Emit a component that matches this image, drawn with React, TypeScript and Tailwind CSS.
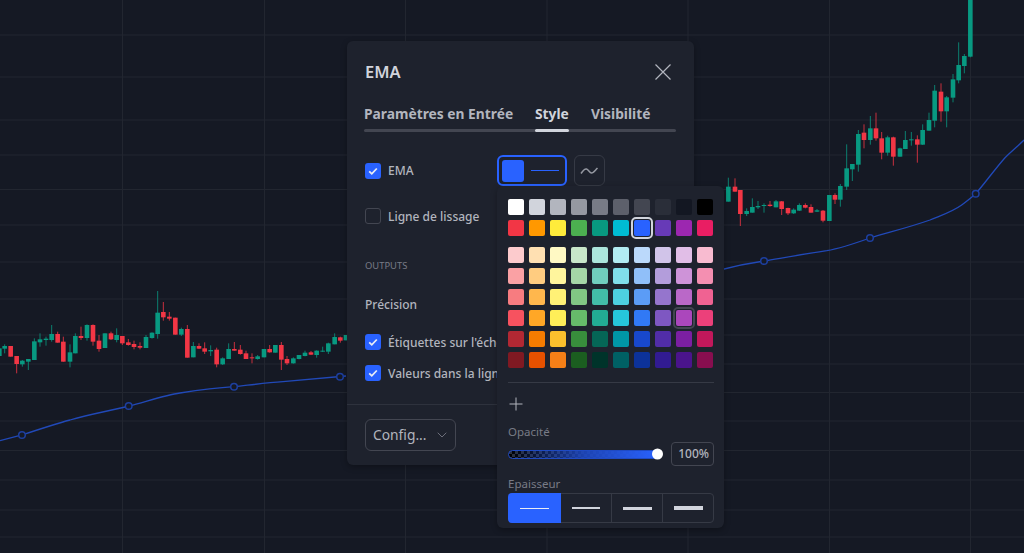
import React from 'react';
import { ChevronDown } from 'lucide-react';

type Candle = [number, number, number, number, number, 'g' | 'r'];

// x, wick top, wick bottom, body top, body bottom (measured at 3x from x=0, y=280)
const leftCandles: Candle[] = [
    [-2, 205, 228, 205, 228, 'g'], [14, 193, 220, 198, 206, 'g'], [32, 198, 230, 198, 230, 'r'], [50, 228, 280, 228, 252, 'r'],
    [67, 240, 260, 242, 253, 'g'], [85, 237, 270, 237, 245, 'g'], [103, 175, 240, 184, 240, 'g'], [120, 160, 200, 178, 187, 'g'],
    [138, 170, 197, 176, 180, 'g'], [155, 135, 185, 162, 180, 'g'], [173, 155, 188, 162, 188, 'r'], [190, 170, 245, 185, 245, 'r'],
    [210, 193, 262, 217, 245, 'g'], [226, 160, 220, 168, 220, 'g'], [243, 140, 180, 168, 174, 'r'], [261, 133, 182, 135, 174, 'g'],
    [279, 133, 197, 135, 185, 'r'], [297, 165, 215, 182, 207, 'r'], [315, 160, 204, 160, 204, 'g'], [333, 155, 180, 160, 178, 'r'],
    [350, 145, 187, 165, 180, 'g'], [367, 168, 195, 168, 190, 'r'], [385, 177, 197, 187, 195, 'r'], [402, 182, 208, 192, 201, 'r'],
    [420, 187, 208, 198, 203, 'r'], [438, 165, 204, 171, 204, 'g'], [456, 157, 176, 158, 174, 'g'], [473, 33, 176, 98, 162, 'g'],
    [490, 66, 122, 96, 112, 'r'], [508, 96, 122, 110, 116, 'r'], [526, 113, 164, 113, 164, 'r'], [544, 143, 168, 147, 164, 'g'],
    [562, 135, 233, 147, 233, 'r'], [580, 186, 232, 198, 232, 'g'], [597, 190, 207, 198, 206, 'r'], [614, 187, 222, 205, 215, 'r'],
    [632, 196, 228, 210, 214, 'g'], [650, 203, 262, 209, 253, 'r'], [668, 232, 255, 235, 253, 'g'], [686, 190, 237, 207, 237, 'g'],
    [703, 186, 212, 207, 212, 'r'], [721, 195, 224, 209, 222, 'r'], [738, 212, 237, 220, 237, 'r'], [756, 220, 250, 232, 235, 'r'],
    [773, 225, 239, 229, 237, 'g'], [792, 207, 232, 207, 232, 'g'], [809, 195, 218, 207, 217, 'r'], [826, 195, 218, 195, 218, 'g'],
    [844, 186, 270, 195, 239, 'r'], [861, 228, 255, 237, 250, 'r'], [880, 232, 251, 235, 250, 'g'], [897, 225, 238, 225, 237, 'g'],
    [915, 212, 229, 218, 228, 'g'], [933, 213, 225, 217, 224, 'r'], [950, 211, 233, 212, 225, 'g'], [968, 200, 216, 212, 215, 'g'],
    [985, 188, 222, 190, 215, 'g'], [1004, 160, 193, 171, 193, 'g'], [1021, 170, 188, 172, 182, 'r'], [1038, 165, 181, 165, 181, 'g'],
];

// same, from x=720, y=0
const rightCandles: Candle[] = [
    [25, 533, 605, 560, 605, 'g'], [45, 535, 575, 560, 575, 'r'], [61, 570, 678, 570, 642, 'r'], [80, 625, 648, 633, 642, 'g'],
    [97, 595, 638, 621, 638, 'g'], [114, 603, 627, 618, 622, 'g'], [132, 610, 638, 615, 618, 'g'], [150, 603, 620, 614, 618, 'r'],
    [168, 600, 622, 604, 622, 'g'], [185, 603, 645, 604, 627, 'r'], [204, 623, 645, 624, 640, 'r'], [221, 625, 642, 629, 640, 'g'],
    [238, 610, 633, 615, 632, 'g'], [256, 610, 625, 615, 623, 'r'], [273, 613, 638, 621, 638, 'r'], [291, 627, 636, 631, 635, 'g'],
    [309, 630, 667, 632, 662, 'r'], [328, 585, 663, 585, 663, 'g'], [345, 580, 612, 585, 599, 'r'], [361, 552, 620, 558, 599, 'g'],
    [380, 433, 570, 505, 560, 'g'], [397, 492, 543, 492, 508, 'g'], [415, 390, 515, 402, 494, 'g'], [432, 373, 445, 398, 420, 'r'],
    [451, 348, 434, 385, 420, 'g'], [468, 338, 422, 385, 415, 'r'], [485, 396, 478, 415, 458, 'r'], [503, 407, 467, 412, 458, 'g'],
    [520, 410, 497, 412, 470, 'r'], [540, 443, 470, 445, 470, 'g'], [556, 393, 447, 420, 447, 'g'], [574, 396, 437, 418, 421, 'g'],
    [592, 406, 488, 418, 434, 'r'], [608, 373, 435, 390, 434, 'g'], [627, 338, 392, 360, 392, 'g'], [644, 255, 382, 272, 362, 'g'],
    [663, 250, 365, 275, 334, 'r'], [680, 288, 382, 292, 334, 'g'], [699, 222, 307, 238, 293, 'g'], [716, 127, 250, 195, 241, 'g'],
    [733, 162, 220, 168, 198, 'g'], [751, 0, 172, 0, 170, 'g'],
];

const gridY = [35, 77, 120, 155, 189.5, 225, 262, 299, 335, 364, 392.5, 421, 450.5, 480, 510, 537];
const gridX = [122.5, 264.5, 405.5, 547, 688, 829.5, 970.5];

const emaLeft = 'M0 440.7L22 435C40 429 55 424 70 420C90 414 110 411 128.7 406C145 402 165 395 180 393C200 390 215 388 234 386.700C250 385 265 383 283 381.700C300 380 320 378.500 346 376';
const emaRight = 'M720 270C735 266 750 263 764 261C785 257.500 805 254 826.700 250.700C842 248 856 243 870 238C890 232 910 227 930 220C942 215 952 212 961.700 205C967 201 972 197 975.700 193.700C985 183 995 169 1005 157.700C1012 151 1018 146 1024 140';
const emaDots = [[22, 435], [128.7, 406], [234, 386.7], [340, 376.7], [764, 261], [870, 238], [975.7, 193.7]];

const swatchTop = [
    ['#ffffff', '#d1d4dc', '#b2b5be', '#9598a1', '#787b86', '#5d606b', '#434651', '#2a2e39', '#131722', '#000000'],
    ['#f23645', '#ff9800', '#ffeb3b', '#4caf50', '#089981', '#00bcd4', '#2962ff', '#673ab7', '#9c27b0', '#e91e63'],
];
const swatchBottom = [
    ['#fccbcd', '#ffe0b2', '#fff9c4', '#c8e6c9', '#ace5dc', '#b2ebf2', '#bbd9fb', '#d1c4e9', '#e1bee7', '#f8bbd0'],
    ['#faa1a4', '#ffcc80', '#fff59d', '#a5d6a7', '#70ccbd', '#80deea', '#90bff9', '#b39ddb', '#ce93d8', '#f48fb1'],
    ['#f77c80', '#ffb74d', '#fff176', '#81c784', '#42bda8', '#4dd0e1', '#5b9cf6', '#9575cd', '#ba68c8', '#f06292'],
    ['#f7525f', '#ffa726', '#ffee58', '#66bb6a', '#22ab94', '#26c6da', '#3179f5', '#7e57c2', '#ab47bc', '#ec407a'],
    ['#b22833', '#f57c00', '#fbc02d', '#388e3c', '#056656', '#0097a7', '#1848cc', '#512da8', '#7b1fa2', '#c2185b'],
    ['#801922', '#e65100', '#f57f17', '#1b5e20', '#00332a', '#006064', '#0c3299', '#311b92', '#4a148c', '#880e4f'],
];

const Candles: React.FC<{ data: Candle[]; ox: number; oy: number }> = ({ data, ox, oy }) => (
    <>
        {data.map(([x, wt, wb, bt, bb, c], i) => {
            const color = c === 'g' ? '#089981' : '#f23645';
            const cx = ox + x / 3;
            return (
                <g key={i}>
                    <rect x={cx - 0.5} y={oy + wt / 3} width={1} height={(wb - wt) / 3} fill={color} opacity={0.8} />
                    <rect x={cx - 2.3} y={oy + bt / 3} width={4.6} height={Math.max((bb - bt) / 3, 1)} fill={color} />
                </g>
            );
        })}
    </>
);

const Chart = () => (
    <svg className="absolute inset-0" width={1024} height={553} viewBox="0 0 1024 553">
        {gridY.map((y) => <line key={y} x1={0} x2={1024} y1={y} y2={y} stroke="#222630" strokeWidth={1} />)}
        {gridX.map((x) => <line key={x} x1={x} x2={x} y1={0} y2={553} stroke="#222630" strokeWidth={1} />)}
        <Candles data={leftCandles} ox={0} oy={280} />
        <Candles data={rightCandles} ox={720} oy={0} />
        <path d={emaLeft} fill="none" stroke="#2149b8" strokeWidth={1.3} />
        <path d={emaRight} fill="none" stroke="#2149b8" strokeWidth={1.3} />
        {emaDots.map(([x, y]) => <circle key={x} cx={x} cy={y} r={3.3} fill="#151924" stroke="#1d3f9f" strokeWidth={1.5} />)}
    </svg>
);

const Checkbox: React.FC<{ checked?: boolean }> = ({ checked }) =>
    checked ? (
        <span className="flex h-4 w-4 shrink-0 items-center justify-center rounded-[3px] bg-[#2962ff]">
            <svg width="16" height="16" viewBox="0 0 16 16" fill="none">
                <path d="M4.2 8.300l2.600 2.500 5-5.300" stroke="#e8ecf5" strokeWidth="1.8" />
            </svg>
        </span>
    ) : (
        <span className="h-4 w-4 shrink-0 rounded-[3px] border border-[#434651]" />
    );

const SwatchRow: React.FC<{ colors: string[] }> = ({ colors }) => (
    <div className="flex gap-[5px]">
        {colors.map((c) => (
            <div
                key={c}
                style={{ backgroundColor: c }}
                className={
                    c === '#2962ff'
                        ? 'h-4 w-4 rounded-[2px] outline-2 outline-offset-1 outline-[#d1d4dc]'
                        : c === '#ab47bc'
                          ? 'h-4 w-4 rounded-[2px] outline-2 outline-offset-1 outline-[#434651]'
                          : 'h-4 w-4 rounded-[2px]'
                }
            />
        ))}
    </div>
);

const ColorPicker = () => (
    <div className="absolute left-[497px] top-[186px] h-[342px] w-[227px] rounded-md bg-[#1e222d] pl-[11px] pt-[13px] shadow-[0_2px_6px_rgba(0,0,0,0.3)]">
        <div className="flex flex-col gap-[5px]">
            {swatchTop.map((row) => <SwatchRow key={row[0]} colors={row} />)}
        </div>
        <div className="mt-[11px] flex flex-col gap-[5px]">
            {swatchBottom.map((row) => <SwatchRow key={row[0]} colors={row} />)}
        </div>
        <div className="mt-[14px] h-px w-[206px] bg-[#363a45]" />
        <svg className="mt-[14px] block" width="16" height="14" viewBox="0 0 16 14" fill="none">
            <path d="M1.500 7h13M8 .5v13" stroke="#b2b5be" strokeWidth="1" />
        </svg>
        <div className="mt-[13px] flex h-4 items-center text-[11.5px] leading-none text-[#787b86]">Opacité</div>
        <div className="mt-[2px] flex h-6 w-[206px] items-center justify-between">
            <div className="relative h-[9px] w-[152px] rounded-full border border-[#1f4ac4] bg-[repeating-conic-gradient(#000000_0_25%,#2a2e39_0_50%)] bg-size-[6px_6px]">
                <div className="h-full w-full rounded-full bg-linear-to-r from-transparent via-[#1f4ac4]/90 via-50% to-[#2962ff]" />
                <div className="absolute right-[-4px] top-1/2 h-[11px] w-[11px] -translate-y-1/2 rounded-full bg-white" />
            </div>
            <div className="flex h-6 w-[43px] items-center justify-end rounded-[4px] border border-[#434651] pr-1 text-xs font-medium text-[#b2b5be]">100%</div>
        </div>
        <div className="mt-[10px] flex h-4 items-center text-[11.5px] leading-none text-[#787b86]">Epaisseur</div>
        <div className="mt-[1px] flex h-[30px] w-[206px] rounded-[4px] border border-[#363a45]">
            <div className="-my-px -ml-px flex w-[53px] items-center justify-center rounded-l-[4px] bg-[#2962ff]"><div className="h-px w-[29px] bg-[#e8ecf5]" /></div>
            <div className="flex w-[50px] items-center justify-center"><div className="h-[2px] w-[28px] bg-[#d1d4dc]" /></div>
            <div className="flex w-[51px] items-center justify-center border-l border-[#363a45]"><div className="h-[3px] w-[29px] bg-[#d1d4dc]" /></div>
            <div className="flex flex-1 items-center justify-center border-l border-[#363a45]"><div className="h-1 w-[29px] bg-[#d1d4dc]" /></div>
        </div>
    </div>
);

const Dialog = () => (
    <div className="absolute left-[347px] top-[41px] flex h-[424px] w-[347px] flex-col rounded-md bg-[#1e222d] pt-5 text-[#b2b5be] shadow-[0_2px_6px_rgba(0,0,0,0.3)]">
        <div className="flex h-[22px] items-center justify-between pl-[18px] pr-[23px]">
            <span className="text-[16.5px] font-semibold text-[#d1d4dc]">EMA</span>
            <svg width="16" height="16" viewBox="0 0 16 16" fill="none">
                <path d="M.5.5l15 15M15.500.5l-15 15" stroke="#b2b5be" strokeWidth="1.2" />
            </svg>
        </div>
        <div className="mt-[21px] flex h-5 items-center pl-[17px] text-[13.8px] font-bold whitespace-nowrap">
            <span className="w-[171px]">Paramètres en Entrée</span>
            <span className="w-[56px] text-[#d1d4dc]">Style</span>
            <span>Visibilité</span>
        </div>
        <div className="ml-[17px] mt-[5px] h-[3px] w-[312px] rounded-full bg-[#434651]">
            <div className="ml-[171px] h-full w-[34px] rounded-full bg-[#d1d4dc]" />
        </div>

        <div className="mt-[23px] flex h-[31px] items-center pl-[18px]">
            <div className="flex w-[132px] items-center gap-[7px]">
                <Checkbox checked />
                <span className="pt-px text-xs font-medium">EMA</span>
            </div>
            <div className="flex h-[31px] w-[70px] items-center gap-[7px] rounded-md border-2 border-[#2962ff] pl-[3px]">
                <div className="h-[22px] w-[22px] rounded-[3px] bg-[#2962ff]" />
                <div className="h-px w-7 bg-[#2962ff]" />
            </div>
            <div className="ml-[7px] flex h-[31px] w-[31px] items-center justify-center rounded-md border border-[#363a45]">
                <svg width="19" height="10" viewBox="0 0 19 10" fill="none">
                    <path d="M1 7.500c2-3 3.500-5 5.500-4.500s3 4 5 4 3.500-2.500 6-5" stroke="#9598a1" strokeWidth="1.5" />
                </svg>
            </div>
        </div>
        <div className="mt-[22px] flex h-4 items-center gap-[7px] pl-[18px]">
            <Checkbox />
            <span className="pt-px text-xs font-medium">Ligne de lissage</span>
        </div>
        <div className="mt-[34px] flex h-4 items-center pl-[18px] text-[9.4px] text-[#787b86]">OUTPUTS</div>
        <div className="mt-[21px] flex h-5 items-center pl-[18px] text-xs font-medium">Précision</div>
        <div className="mt-[19px] flex h-4 items-center gap-[7px] pl-[18px] whitespace-nowrap">
            <Checkbox checked />
            <span className="pt-px text-xs font-medium">Étiquettes sur l'échelle des prix</span>
        </div>
        <div className="mt-[15px] flex h-4 items-center gap-[7px] pl-[18px] whitespace-nowrap">
            <Checkbox checked />
            <span className="pt-px text-xs font-medium">Valeurs dans la ligne d'état</span>
        </div>
        <div className="mt-[23px] border-t border-[#2e323d] pl-[18px] pt-[14px]">
            <div className="flex h-8 w-[91px] items-center justify-between rounded-md border border-[#434651] pl-[7px] pr-[5px] text-[13.8px]">
                <span>Config...</span>
                <ChevronDown size={16} strokeWidth={1.3} className="text-[#787b86]" />
            </div>
        </div>
    </div>
);

export default function App() {
    return (
        <div className="relative h-[553px] w-[1024px] overflow-hidden bg-[#151924] font-['Noto_Sans',sans-serif]">
            <Chart />
            <Dialog />
            <ColorPicker />
        </div>
    );
}
